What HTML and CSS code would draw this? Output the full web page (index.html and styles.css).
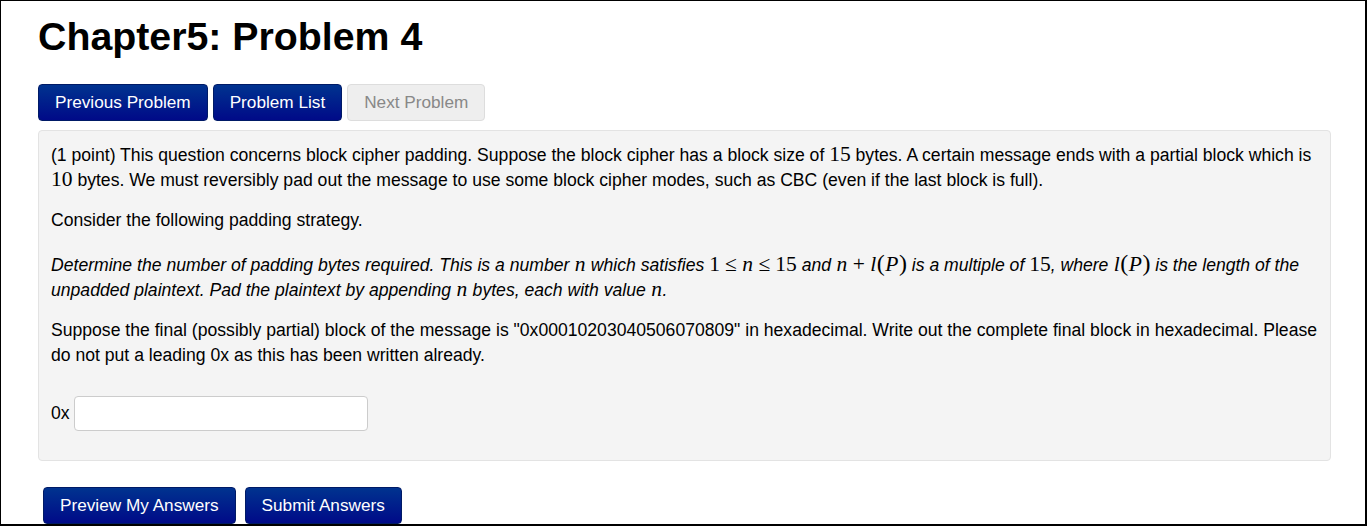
FILE: index.html
```html
<!DOCTYPE HTML><html><head><title>Chapter5: Problem 4</title><meta name="viewport" content="width=device-width, initial-scale=1">
<link rel="stylesheet" href="styles.css">
</head><body><div class="frame">
<h1>Chapter5: Problem 4</h1>
<div class="nav"><a class="btn">Previous Problem</a><a class="btn">Problem List</a><a class="btn off">Next Problem</a></div>
<div class="well">
<p>(1 point) This question concerns block cipher padding. Suppose the block cipher has a block size of <span class="m">15</span> bytes. A certain message ends with a partial block which is <span class="m">10</span> bytes. We must reversibly pad out the message to use some block cipher modes, such as CBC (even if the last block is full).</p>
<p>Consider the following padding strategy.</p>
<p class="it">Determine the number of padding bytes required. This is a number <span class="m"><i>n</i></span> which satisfies <span class="m">1<span class="o">&le;</span><i>n</i><span class="o">&le;</span>15</span> and <span class="m"><i>n</i><span class="o">+</span><i>l</i><span class="p">(</span><i>P</i><span class="p">)</span></span> is a multiple of <span class="m">15</span>, where <span class="m"><i>l</i><span class="p">(</span><i>P</i><span class="p">)</span></span> is the length of the unpadded plaintext. Pad the plaintext by appending <span class="m"><i>n</i></span> bytes, each with value <span class="m"><i>n</i></span>.</p>
<p>Suppose the final (possibly partial) block of the message is "0x00010203040506070809" in hexadecimal. Write out the complete final block in hexadecimal. Please do not put a leading 0x as this has been written already.</p>
<div class="ans"><label for="a1">0x</label><input type="text" id="a1"></div>
</div>
<div class="sub"><a class="btn">Preview My Answers</a><a class="btn">Submit Answers</a></div>
</div></body></html>
```
FILE: styles.css
```css
html{font-family:"Liberation Sans",Arial,Helvetica,sans-serif}
body{margin:0;padding:0}
.frame{box-sizing:border-box;height:526px;border:1px solid #000;border-width:1px 2px 2px 1px;padding:0 34px 0 37px;overflow:hidden}
h1{font-size:39.3px;font-weight:bold;margin:12px 0 0;line-height:46px;color:#000}
.nav{margin-top:25px;display:flex;gap:5px}
.btn{display:inline-block;box-sizing:border-box;height:37px;line-height:35px;padding:0 16px;font-size:17.2px;color:#fff;border:1px solid #001a66;border-radius:4px;background:linear-gradient(#00338f,#000a88);cursor:pointer}
.btn.off{background:#eee;border-color:#ddd;color:#888;cursor:default}
.well{margin-top:9px;background:#f4f4f4;border:1px solid #e3e3e3;border-radius:4px;padding:12px 12px 29px;color:#000;font-size:17.6px;line-height:25px}
.well p{margin:0 0 15px}
.it{font-style:italic;padding-top:5px}
.m{font-family:"Liberation Serif","Times New Roman",serif;font-style:normal;font-size:21.5px;line-height:20px}
.m i{font-style:italic;margin:0 0.5px}
.o{margin:0 5px}
.p{font-size:24px}
.ans{display:flex;align-items:center;gap:4px;margin-top:28px}
.ans input{box-sizing:border-box;width:294px;height:35px;border:1px solid #ccc;border-radius:4px;background:#fff;font-size:16px;padding:4px 8px}
.sub{margin:26px 0 0 5px;display:flex;gap:9px}
```
